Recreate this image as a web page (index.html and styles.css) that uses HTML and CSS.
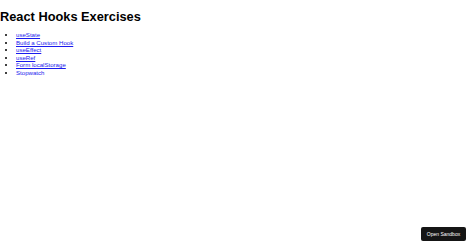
FILE: index.html
```html
<!DOCTYPE html>
<html>
<head>
<meta charset="utf-8">
<link rel="stylesheet" href="styles.css">
</head>
<body>
<h1 class="title">React Hooks Exercises</h1>
<ul class="list">
<li><a href="#">useState</a></li>
<li><a href="#">Build a Custom Hook</a></li>
<li><a href="#">useEffect</a></li>
<li><a href="#">useRef</a></li>
<li><a href="#">Form localStorage</a></li>
<li><a href="#">Stopwatch</a></li>
</ul>
<button class="sandbox">Open Sandbox</button>
</body>
</html>
```
FILE: styles.css
```css
html, body {
  margin: 0;
  padding: 0;
  background: #fff;
  font-family: "Liberation Sans", Arial, sans-serif;
}
.title {
  font-size: 12.8px;
  font-weight: bold;
  margin: 8.6px 0 7.8px;
  color: #000;
}
.list {
  font-size: 6.1px;
  line-height: 7.5px;
  margin: 0;
  padding-left: 16px;
}
.list a {
  color: #1a1aee;
}
.sandbox {
  position: absolute;
  right: 8px;
  bottom: 7px;
  width: 45px;
  height: 14px;
  padding: 0;
  border: 0;
  border-radius: 2px;
  background: #151515;
  color: #fff;
  font-family: "Liberation Sans", Arial, sans-serif;
  font-size: 5px;
}
```
